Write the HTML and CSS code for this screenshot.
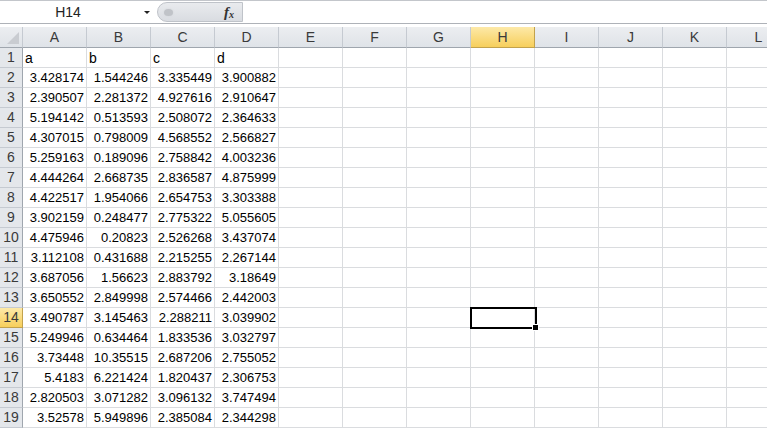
FILE: index.html
```html
<!DOCTYPE html>
<html lang="en">
<head>
    <meta charset="UTF-8">
    <title>Sheet1</title>
    <link rel="stylesheet" href="styles.css">
</head>
<body>
<div class="formula-bar">
    <div class="name-box">
        <span class="name">H14</span>
        <span class="arrow"></span>
    </div>
    <div class="fx-pill">
        <span class="knob"></span>
        <span class="fx">f<sub>x</sub></span>
    </div>
    <div class="formula"></div>
</div>

<div class="sheet">
    <div class="row head">
        <div class="corner"><span class="tri"></span></div>
        <div class="col">A</div>
        <div class="col">B</div>
        <div class="col">C</div>
        <div class="col">D</div>
        <div class="col">E</div>
        <div class="col">F</div>
        <div class="col">G</div>
        <div class="col active">H</div>
        <div class="col">I</div>
        <div class="col">J</div>
        <div class="col">K</div>
        <div class="col">L</div>
    </div>

    <div class="row"><div class="rh">1</div><div class="cell txt">a</div><div class="cell txt">b</div><div class="cell txt">c</div><div class="cell txt">d</div><div class="rest"></div></div>
    <div class="row"><div class="rh">2</div><div class="cell">3.428174</div><div class="cell">1.544246</div><div class="cell">3.335449</div><div class="cell">3.900882</div><div class="rest"></div></div>
    <div class="row"><div class="rh">3</div><div class="cell">2.390507</div><div class="cell">2.281372</div><div class="cell">4.927616</div><div class="cell">2.910647</div><div class="rest"></div></div>
    <div class="row"><div class="rh">4</div><div class="cell">5.194142</div><div class="cell">0.513593</div><div class="cell">2.508072</div><div class="cell">2.364633</div><div class="rest"></div></div>
    <div class="row"><div class="rh">5</div><div class="cell">4.307015</div><div class="cell">0.798009</div><div class="cell">4.568552</div><div class="cell">2.566827</div><div class="rest"></div></div>
    <div class="row"><div class="rh">6</div><div class="cell">5.259163</div><div class="cell">0.189096</div><div class="cell">2.758842</div><div class="cell">4.003236</div><div class="rest"></div></div>
    <div class="row"><div class="rh">7</div><div class="cell">4.444264</div><div class="cell">2.668735</div><div class="cell">2.836587</div><div class="cell">4.875999</div><div class="rest"></div></div>
    <div class="row"><div class="rh">8</div><div class="cell">4.422517</div><div class="cell">1.954066</div><div class="cell">2.654753</div><div class="cell">3.303388</div><div class="rest"></div></div>
    <div class="row"><div class="rh">9</div><div class="cell">3.902159</div><div class="cell">0.248477</div><div class="cell">2.775322</div><div class="cell">5.055605</div><div class="rest"></div></div>
    <div class="row"><div class="rh">10</div><div class="cell">4.475946</div><div class="cell">0.20823</div><div class="cell">2.526268</div><div class="cell">3.437074</div><div class="rest"></div></div>
    <div class="row"><div class="rh">11</div><div class="cell">3.112108</div><div class="cell">0.431688</div><div class="cell">2.215255</div><div class="cell">2.267144</div><div class="rest"></div></div>
    <div class="row"><div class="rh">12</div><div class="cell">3.687056</div><div class="cell">1.56623</div><div class="cell">2.883792</div><div class="cell">3.18649</div><div class="rest"></div></div>
    <div class="row"><div class="rh">13</div><div class="cell">3.650552</div><div class="cell">2.849998</div><div class="cell">2.574466</div><div class="cell">2.442003</div><div class="rest"></div></div>
    <div class="row"><div class="rh active">14</div><div class="cell">3.490787</div><div class="cell">3.145463</div><div class="cell">2.288211</div><div class="cell">3.039902</div><div class="rest"></div></div>
    <div class="row"><div class="rh">15</div><div class="cell">5.249946</div><div class="cell">0.634464</div><div class="cell">1.833536</div><div class="cell">3.032797</div><div class="rest"></div></div>
    <div class="row"><div class="rh">16</div><div class="cell">3.73448</div><div class="cell">10.35515</div><div class="cell">2.687206</div><div class="cell">2.755052</div><div class="rest"></div></div>
    <div class="row"><div class="rh">17</div><div class="cell">5.4183</div><div class="cell">6.221424</div><div class="cell">1.820437</div><div class="cell">2.306753</div><div class="rest"></div></div>
    <div class="row"><div class="rh">18</div><div class="cell">2.820503</div><div class="cell">3.071282</div><div class="cell">3.096132</div><div class="cell">3.747494</div><div class="rest"></div></div>
    <div class="row"><div class="rh">19</div><div class="cell">3.52578</div><div class="cell">5.949896</div><div class="cell">2.385084</div><div class="cell">2.344298</div><div class="rest"></div></div>

    <!-- active cell H14 -->
    <div class="selection"><span class="handle"></span></div>
</div>
</body>
</html>
```

FILE: styles.css
```css
* {
    padding: 0;
    margin: 0;
    box-sizing: border-box;
}

body {
    width: 767px;
    height: 428px;
    overflow: hidden;
    background: #fff;
    font-family: "Liberation Sans", Arial, sans-serif;
    font-size: 13px;
    color: #000;
}

/* formula bar */
.formula-bar {
    display: flex;
    height: 24px;
    border-top: 1px solid #c3c6cb;
    border-bottom: 1px solid #aeb2b8;
    margin-bottom: 3px;
}

.name-box {
    width: 157px;
    display: flex;
    align-items: center;
}

.name {
    width: 136px;
    text-align: center;
    color: #222;
    font-size: 14px;
}

.arrow {
    width: 0;
    height: 0;
    border-left: 3px solid transparent;
    border-right: 3px solid transparent;
    border-top: 3px solid #222;
    margin-left: 8px;
    margin-top: 1px;
}

.fx-pill {
    width: 86px;
    margin: 1px 0;
    border: 1px solid #bfc3c9;
    border-radius: 11px 0 0 11px;
    background: linear-gradient(#e9ebee, #d9dce1);
    display: flex;
    align-items: center;
    justify-content: space-between;
    padding: 0 8px 0 6px;
}

.knob {
    width: 9px;
    height: 7px;
    border-radius: 50%;
    background: #c0c3c8;
    box-shadow: 0 0 2px #d0d3d7;
}

.fx {
    font-family: "Liberation Serif", "Times New Roman", serif;
    font-style: italic;
    font-weight: bold;
    font-size: 15px;
    color: #333;
}

.fx sub {
    font-size: 10px;
    vertical-align: -1px;
}

.formula {
    flex: 1;
}

/* grid */
.sheet {
    position: relative;
}

.row {
    display: flex;
    height: 20px;
}

.row.head {
    height: 21px;
}

.corner {
    width: 23px;
    flex: none;
    background: linear-gradient(#eceef1, #dfe3e8);
    border-right: 1px solid #c5cad1;
    border-bottom: 1px solid #9fa6ae;
    position: relative;
}

.tri {
    position: absolute;
    right: 3px;
    bottom: 3px;
    width: 0;
    height: 0;
    border-left: 12px solid transparent;
    border-bottom: 12px solid #c9ccd1;
}

.col {
    width: 64px;
    flex: none;
    background: linear-gradient(#eceef1, #dfe3e8);
    border-right: 1px solid #c5cad1;
    border-bottom: 1px solid #9fa6ae;
    text-align: center;
    line-height: 20px;
    font-size: 14px;
    color: #3a3a3a;
}

.col.active,
.rh.active {
    background: linear-gradient(#fde9a8, #f7cf5c);
    border-right-color: #c2a24c;
    border-bottom-color: #c2a24c;
}

.rh {
    width: 23px;
    flex: none;
    background: #e4e7eb;
    border-right: 1px solid #9fa6ae;
    border-bottom: 1px solid #c5cad1;
    text-align: center;
    line-height: 19px;
    font-size: 14px;
    color: #3a3a3a;
}

.cell {
    width: 64px;
    flex: none;
    border-right: 1px solid #dadcdf;
    border-bottom: 1px solid #dadcdf;
    text-align: right;
    padding: 0 2px;
    line-height: 20px;
    white-space: nowrap;
}

.cell.txt {
    text-align: left;
    font-size: 14px;
}

.rest {
    flex: 1;
    border-bottom: 1px solid #dadcdf;
    background: repeating-linear-gradient(to right, transparent 0 63px, #dadcdf 63px 64px);
}

.selection {
    position: absolute;
    left: 470px;
    top: 280px;
    width: 67px;
    height: 22px;
    border: 2px solid #000;
}

.handle {
    position: absolute;
    right: -4px;
    bottom: -4px;
    width: 7px;
    height: 7px;
    background: #000;
    border: 1px solid #fff;
}
```
